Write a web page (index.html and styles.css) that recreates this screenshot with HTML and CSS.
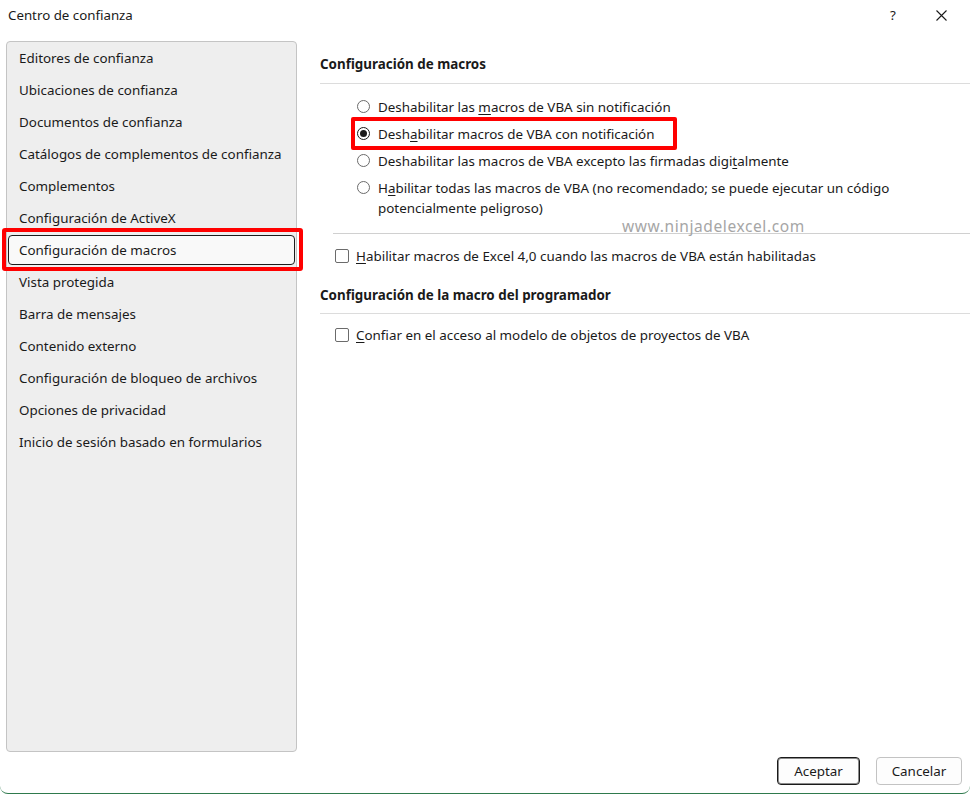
FILE: index.html
```html
<!DOCTYPE html>
<html lang="es">
<head>
  <meta charset="UTF-8" />
  <meta name="viewport" content="width=device-width, initial-scale=1.0" />
  <title>Centro de confianza</title>
  <link rel="stylesheet" href="styles.css">
</head>
<body>
  <div class="ventana">
    <div class="barra-titulo">
      <span class="titulo">Centro de confianza</span>
      <span class="ayuda">?</span>
      <span class="cerrar">
        <svg width="11" height="11" viewBox="0 0 11 11"><path d="M0.5 0.5 L10.5 10.5 M10.5 0.5 L0.5 10.5" stroke="#1a1a1a" stroke-width="1.1" fill="none"/></svg>
      </span>
    </div>

    <div class="principal">
      <ul class="menu">
        <li>Editores de confianza</li>
        <li>Ubicaciones de confianza</li>
        <li>Documentos de confianza</li>
        <li>Catálogos de complementos de confianza</li>
        <li>Complementos</li>
        <li>Configuración de ActiveX</li>
        <li class="activo">Configuración de macros</li>
        <li>Vista protegida</li>
        <li>Barra de mensajes</li>
        <li>Contenido externo</li>
        <li>Configuración de bloqueo de archivos</li>
        <li>Opciones de privacidad</li>
        <li>Inicio de sesión basado en formularios</li>
      </ul>

      <div class="contenido">
        <h2 class="seccion">Configuración de macros</h2>

        <div class="opciones">
          <label class="opcion">
            <span class="radio"></span>
            <span class="texto">Deshabilitar las <u>m</u>acros de VBA sin notificación</span>
          </label>
          <label class="opcion marcada">
            <span class="radio on"></span>
            <span class="texto">Desh<u>a</u>bilitar macros de VBA con notificación</span>
          </label>
          <label class="opcion">
            <span class="radio"></span>
            <span class="texto">Deshabilitar las macros de VBA excepto las firmadas digi<u>t</u>almente</span>
          </label>
          <label class="opcion">
            <span class="radio"></span>
            <span class="texto">H<u>a</u>bilitar todas las macros de VBA (no recomendado; se puede ejecutar un código potencialmente peligroso)</span>
          </label>
        </div>

        <div class="separador">
          <span class="marca-agua">www.ninjadelexcel.com</span>
        </div>

        <label class="casilla">
          <span class="check"></span>
          <span class="texto"><u>H</u>abilitar macros de Excel 4,0 cuando las macros de VBA están habilitadas</span>
        </label>

        <h2 class="seccion seccion-2">Configuración de la macro del programador</h2>

        <label class="casilla casilla-2">
          <span class="check"></span>
          <span class="texto"><u>C</u>onfiar en el acceso al modelo de objetos de proyectos de VBA</span>
        </label>
      </div>
    </div>

    <div class="pie">
      <button class="boton principal-btn">Aceptar</button>
      <button class="boton">Cancelar</button>
    </div>
  </div>
</body>
</html>
```

FILE: styles.css
```css
body {
  margin: 0;
  background: #fff;
  font-family: "Segoe UI", "Noto Sans", sans-serif;
  font-size: 13.4px;
  color: #1a1a1a;
}

.ventana {
  width: 970px;
  height: 794px;
  box-sizing: border-box;
  border-bottom: 1px solid #2f7a4d;
  border-radius: 0 0 8px 8px;
  display: flex;
  flex-direction: column;
  overflow: hidden;
}

/* barra de titulo */
.barra-titulo {
  height: 30px;
  display: flex;
  align-items: center;
  padding-left: 8px;
}

.titulo {
  flex: 1;
  font-size: 13.3px;
}

.ayuda {
  width: 20px;
  text-align: center;
  margin-right: 33px;
}

.cerrar {
  width: 11px;
  height: 11px;
  margin-right: 23px;
  display: flex;
}

/* cuerpo */
.principal {
  flex: 1;
  display: flex;
  padding: 11px 0 0 6px;
}

.menu {
  list-style: none;
  margin: 0;
  padding: 0;
  width: 291px;
  height: 711px;
  box-sizing: border-box;
  background: #eeeeee;
  border: 1px solid #c4c4c4;
  border-radius: 4px;
}

.menu li {
  height: 32px;
  line-height: 32px;
  padding-left: 12px;
  white-space: nowrap;
}

.menu li.activo {
  position: relative;
  height: 28px;
  line-height: 28px;
  margin: 1px;
  padding-left: 10px;
  background: #f9f9f9;
  border: 1px solid #1c1c1c;
  border-radius: 4px;
}

.menu li.activo::after {
  content: "";
  position: absolute;
  top: -8px;
  left: -7px;
  right: -9px;
  bottom: -7px;
  border: 4px solid #ff0000;
  border-radius: 3px;
}

.contenido {
  flex: 1;
  margin-left: 23px;
}

.seccion {
  margin: 13px 0 0;
  font-size: 13.4px;
  font-weight: bold;
  line-height: 20px;
  padding-bottom: 9px;
  border-bottom: 1px solid #dcdcdc;
}

.seccion-2 {
  margin-top: 19px;
  padding-bottom: 8px;
}

.opciones {
  padding: 9px 0 0 37px;
}

.opcion {
  display: flex;
  align-items: flex-start;
  gap: 8px;
  padding: 4px 0 3px;
  line-height: 20px;
  width: fit-content;
}

.opcion .texto {
  max-width: 530px;
}

.opcion.marcada {
  position: relative;
}

.opcion.marcada::after {
  content: "";
  position: absolute;
  top: -3px;
  bottom: -3px;
  left: -6px;
  right: -23px;
  border: 4px solid #ff0000;
  border-radius: 2px;
}

.radio {
  flex: none;
  width: 13px;
  height: 13px;
  margin-top: 3px;
  box-sizing: border-box;
  border: 1px solid #6b6b6b;
  border-radius: 50%;
  background: #fff;
  display: flex;
  align-items: center;
  justify-content: center;
}

.radio.on {
  border-color: #1a1a1a;
}

.radio.on::before {
  content: "";
  width: 7px;
  height: 7px;
  border-radius: 50%;
  background: #1a1a1a;
}

.separador {
  position: relative;
  margin: 12px 0 0 13px;
  border-top: 1px solid #d0d0d0;
}

.marca-agua {
  position: absolute;
  left: 289px;
  top: -17px;
  font-size: 15.5px;
  letter-spacing: 0.6px;
  color: #a6a6a6;
  line-height: 18px;
}

.casilla {
  display: flex;
  align-items: center;
  gap: 7px;
  padding: 12px 0 0 15px;
  line-height: 20px;
}

.casilla-2 {
  padding-top: 11px;
}

.check {
  flex: none;
  width: 14px;
  height: 14px;
  box-sizing: border-box;
  border: 1px solid #6b6b6b;
  border-radius: 2px;
  background: #fff;
}

u {
  text-underline-offset: 2px;
}

/* pie */
.pie {
  display: flex;
  justify-content: flex-end;
  gap: 16px;
  padding: 5px 8px 8px;
}

.boton {
  height: 28px;
  width: 86px;
  font-family: inherit;
  font-size: 13.4px;
  color: #1a1a1a;
  background: #fdfdfd;
  border: 1px solid #c3c3c3;
  border-radius: 4px;
}

.principal-btn {
  width: 83px;
  border-color: #1a1a1a;
  box-shadow: inset 0 0 0 1px rgba(0,0,0,0.45);
}
```
